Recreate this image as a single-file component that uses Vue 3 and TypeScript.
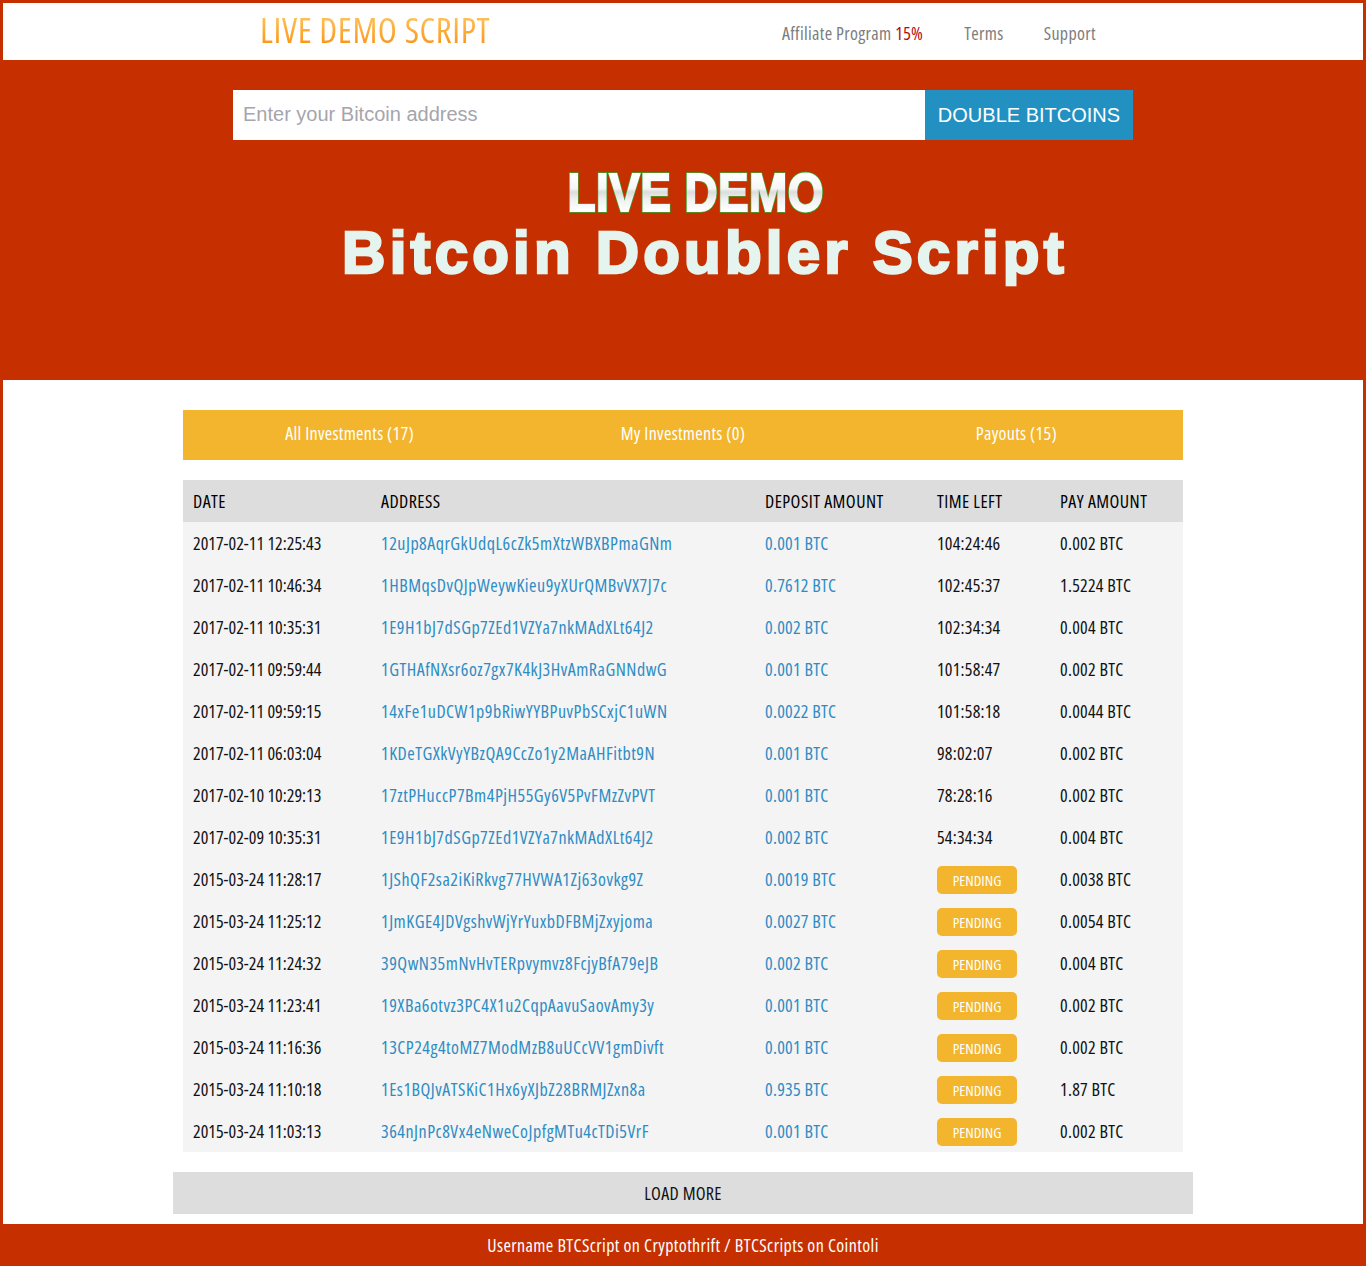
<script setup lang="ts">
interface Row {
  date: string
  address: string
  deposit: string
  timeLeft: string | null
  pay: string
}

const rows: Row[] = [
  { date: '2017-02-11 12:25:43', address: '12uJp8AqrGkUdqL6cZk5mXtzWBXBPmaGNm', deposit: '0.001 BTC', timeLeft: '104:24:46', pay: '0.002 BTC' },
  { date: '2017-02-11 10:46:34', address: '1HBMqsDvQJpWeywKieu9yXUrQMBvVX7J7c', deposit: '0.7612 BTC', timeLeft: '102:45:37', pay: '1.5224 BTC' },
  { date: '2017-02-11 10:35:31', address: '1E9H1bJ7dSGp7ZEd1VZYa7nkMAdXLt64J2', deposit: '0.002 BTC', timeLeft: '102:34:34', pay: '0.004 BTC' },
  { date: '2017-02-11 09:59:44', address: '1GTHAfNXsr6oz7gx7K4kJ3HvAmRaGNNdwG', deposit: '0.001 BTC', timeLeft: '101:58:47', pay: '0.002 BTC' },
  { date: '2017-02-11 09:59:15', address: '14xFe1uDCW1p9bRiwYYBPuvPbSCxjC1uWN', deposit: '0.0022 BTC', timeLeft: '101:58:18', pay: '0.0044 BTC' },
  { date: '2017-02-11 06:03:04', address: '1KDeTGXkVyYBzQA9CcZo1y2MaAHFitbt9N', deposit: '0.001 BTC', timeLeft: '98:02:07', pay: '0.002 BTC' },
  { date: '2017-02-10 10:29:13', address: '17ztPHuccP7Bm4PjH55Gy6V5PvFMzZvPVT', deposit: '0.001 BTC', timeLeft: '78:28:16', pay: '0.002 BTC' },
  { date: '2017-02-09 10:35:31', address: '1E9H1bJ7dSGp7ZEd1VZYa7nkMAdXLt64J2', deposit: '0.002 BTC', timeLeft: '54:34:34', pay: '0.004 BTC' },
  { date: '2015-03-24 11:28:17', address: '1JShQF2sa2iKiRkvg77HVWA1Zj63ovkg9Z', deposit: '0.0019 BTC', timeLeft: null, pay: '0.0038 BTC' },
  { date: '2015-03-24 11:25:12', address: '1JmKGE4JDVgshvWjYrYuxbDFBMjZxyjoma', deposit: '0.0027 BTC', timeLeft: null, pay: '0.0054 BTC' },
  { date: '2015-03-24 11:24:32', address: '39QwN35mNvHvTERpvymvz8FcjyBfA79eJB', deposit: '0.002 BTC', timeLeft: null, pay: '0.004 BTC' },
  { date: '2015-03-24 11:23:41', address: '19XBa6otvz3PC4X1u2CqpAavuSaovAmy3y', deposit: '0.001 BTC', timeLeft: null, pay: '0.002 BTC' },
  { date: '2015-03-24 11:16:36', address: '13CP24g4toMZ7ModMzB8uUCcVV1gmDivft', deposit: '0.001 BTC', timeLeft: null, pay: '0.002 BTC' },
  { date: '2015-03-24 11:10:18', address: '1Es1BQJvATSKiC1Hx6yXJbZ28BRMJZxn8a', deposit: '0.935 BTC', timeLeft: null, pay: '1.87 BTC' },
  { date: '2015-03-24 11:03:13', address: '364nJnPc8Vx4eNweCoJpfgMTu4cTDi5VrF', deposit: '0.001 BTC', timeLeft: null, pay: '0.002 BTC' },
]

const tabs = ['All Investments (17)', 'My Investments (0)', 'Payouts (15)']
</script>

<template>
  <div class="page">
    <header class="topbar">
      <div class="logo">LIVE DEMO SCRIPT</div>
      <nav class="nav">
        <a class="nav-aff">Affiliate Program <b>15%</b></a>
        <a class="nav-terms">Terms</a>
        <a class="nav-support">Support</a>
      </nav>
    </header>

    <section class="hero">
      <form class="deposit-form" @submit.prevent>
        <input class="address-input" type="text" placeholder="Enter your Bitcoin address" />
        <button class="double-btn" type="submit">DOUBLE BITCOINS</button>
      </form>
      <div class="hero-live"><span>LIVE DEMO</span></div>
      <div class="hero-title">Bitcoin Doubler Script</div>
    </section>

    <main class="content">
      <div class="tabs">
        <a v-for="tab in tabs" :key="tab" class="tab">{{ tab }}</a>
      </div>

      <table class="invest-table">
        <colgroup>
          <col style="width: 188px" />
          <col style="width: 384px" />
          <col style="width: 172px" />
          <col style="width: 123px" />
          <col style="width: 133px" />
        </colgroup>
        <thead>
          <tr>
            <th>DATE</th>
            <th>ADDRESS</th>
            <th>DEPOSIT AMOUNT</th>
            <th>TIME LEFT</th>
            <th>PAY AMOUNT</th>
          </tr>
        </thead>
        <tbody>
          <tr v-for="row in rows" :key="row.date">
            <td>{{ row.date }}</td>
            <td class="link address">{{ row.address }}</td>
            <td class="link amount">{{ row.deposit }}</td>
            <td class="time">
              <template v-if="row.timeLeft">{{ row.timeLeft }}</template>
              <span v-else class="badge">PENDING</span>
            </td>
            <td class="amount">{{ row.pay }}</td>
          </tr>
        </tbody>
      </table>

      <button class="load-more" type="button">LOAD MORE</button>
    </main>

    <footer class="footer">Username BTCScript on Cryptothrift / BTCScripts on Cointoli</footer>
  </div>
</template>

<style>
html,
body {
  margin: 0;
  background: #fff;
}
</style>

<style scoped>
.page {
  box-sizing: border-box;
  width: 1366px;
  height: 1266px;
  border: 3px solid #c63000;
  border-bottom: 0;
  background: #fff;
  font-family: 'Open Sans', 'Roboto', sans-serif;
  font-stretch: 75%;
  display: flex;
  flex-direction: column;
}

.topbar {
  height: 57px;
  display: flex;
  align-items: center;
  position: relative;
  padding-left: 257px;
}

.logo {
  font-size: 35px;
  font-weight: 400;
  line-height: 44px;
  letter-spacing: 0.6px;
  white-space: nowrap;
  background: linear-gradient(#ffc45e 15%, #fb981c 80%);
  -webkit-background-clip: text;
  background-clip: text;
  color: transparent;
  margin-top: -4px;
}

.nav {
  position: absolute;
  left: 779px;
  top: 0;
  height: 57px;
  display: flex;
  align-items: center;
  font-size: 18px;
  letter-spacing: 0.33px;
  color: #7d7d7d;
  padding-top: 3px;
  box-sizing: border-box;
}

.nav-aff b {
  font-weight: normal;
  color: #b50d0d;
}

.nav-terms {
  margin-left: 41px;
}

.nav-support {
  margin-left: 40px;
}

.hero {
  height: 320px;
  background: #c63000;
  display: flex;
  flex-direction: column;
  align-items: center;
  padding-top: 30px;
  box-sizing: border-box;
}

.deposit-form {
  display: flex;
  height: 50px;
  width: 900px;
}

.address-input {
  box-sizing: border-box;
  width: 692px;
  height: 50px;
  border: 0;
  outline: 0;
  padding: 0 10px 2px;
  background: #fff;
  font-family: 'Liberation Sans', sans-serif;
  font-size: 20px;
}

.address-input::placeholder {
  color: #a5a5ad;
  opacity: 1;
}

.double-btn {
  width: 208px;
  height: 50px;
  border: 0;
  background: #2390c2;
  color: #fff;
  font-family: 'Liberation Sans', sans-serif;
  font-size: 20px;
  font-stretch: normal;
  padding: 0;
}

.hero-live {
  position: relative;
  margin-top: 22px;
  margin-left: 25px;
  font-family: 'Liberation Sans', sans-serif;
  font-stretch: normal;
  font-weight: bold;
  font-size: 54px;
  line-height: 60px;
  letter-spacing: 0.5px;
  white-space: nowrap;
  transform: scaleX(0.85);
}

.hero-live::before {
  content: 'LIVE DEMO';
  position: absolute;
  left: 0;
  top: 0;
  color: #3fa32d;
  -webkit-text-stroke: 3.5px #3fa32d;
}

.hero-live span {
  position: relative;
  display: block;
  background: linear-gradient(#fff 22%, #f6f6f6 44%, #dcdcdc 50%, #f0f0f0 62%, #fff 82%);
  -webkit-background-clip: text;
  background-clip: text;
  color: transparent;
  -webkit-text-stroke: 2px transparent;
}

.hero-title {
  margin-left: 44px;
  margin-top: -1px;
  font-family: 'Liberation Sans', sans-serif;
  font-stretch: normal;
  font-weight: bold;
  font-size: 60px;
  line-height: 64px;
  letter-spacing: 4.2px;
  color: #e5f4ee;
  -webkit-text-stroke: 2.5px #e5f4ee;
  white-space: nowrap;
}

.content {
  flex: 1;
  display: flex;
  flex-direction: column;
  align-items: center;
  padding-top: 30px;
}

.tabs {
  width: 1000px;
  height: 50px;
  background: #f2b52d;
  display: grid;
  grid-template-columns: repeat(3, 1fr);
  margin-bottom: 20px;
}

.tab {
  color: #fff;
  font-size: 18px;
  letter-spacing: 0.3px;
  line-height: 47px;
  text-align: center;
}

.invest-table {
  width: 1000px;
  border-collapse: collapse;
  table-layout: fixed;
  background: #f4f4f4;
  color: #111;
  font-size: 18px;
}

.invest-table th {
  height: 42px;
  padding: 0 10px;
  background: #ddd;
  text-align: left;
  font-weight: normal;
  letter-spacing: 0.45px;
  color: #000;
}

.invest-table td {
  height: 42px;
  padding: 0 10px;
  white-space: nowrap;
}

.invest-table td.link {
  color: #2e8cc4;
}

.invest-table td.address {
  letter-spacing: 0.5px;
}

.invest-table td.amount {
  letter-spacing: 0.25px;
}

.invest-table td.time {
  letter-spacing: 0.2px;
}

.badge {
  display: block;
  box-sizing: border-box;
  width: 80px;
  height: 28px;
  margin-top: 2px;
  line-height: 29px;
  text-align: center;
  border-radius: 5px;
  background: #f2b52d;
  color: #fff;
  font-size: 15px;
  letter-spacing: 0;
}

.load-more {
  width: 1020px;
  height: 42px;
  margin-top: 20px;
  border: 0;
  padding: 0;
  background: #ddd;
  color: #111;
  font-family: inherit;
  font-stretch: inherit;
  font-size: 18px;
  letter-spacing: 0.3px;
}

.footer {
  height: 42px;
  margin: 10px -3px 0;
  background: #c63000;
  color: #fff;
  font-size: 18px;
  letter-spacing: 0.4px;
  line-height: 42px;
  text-align: center;
}
</style>
